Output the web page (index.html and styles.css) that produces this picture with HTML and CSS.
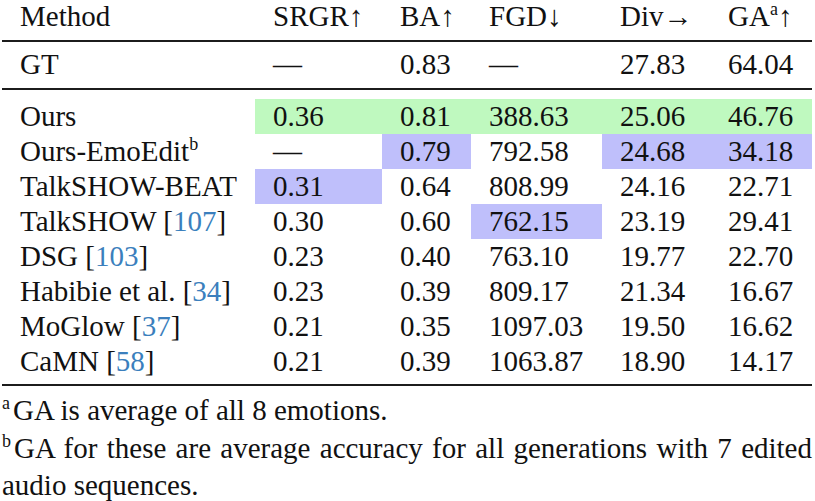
FILE: index.html
```html
<!DOCTYPE html>
<html>
<head>
<meta charset="utf-8">
<link rel="stylesheet" href="styles.css">
</head>
<body>
<div class="page">
  <table class="results">
    <colgroup>
      <col class="c-method"><col class="c-srgr"><col class="c-ba"><col class="c-fgd"><col class="c-div"><col class="c-ga">
    </colgroup>
    <thead>
      <tr class="head">
        <th>Method</th><th>SRGR↑</th><th>BA↑</th><th>FGD↓</th><th>Div→</th><th>GA<sup>a</sup>↑</th>
      </tr>
    </thead>
    <tbody class="gt">
      <tr>
        <td>GT</td><td>—</td><td>0.83</td><td>—</td><td>27.83</td><td>64.04</td>
      </tr>
    </tbody>
    <tbody class="data">
      <tr class="spacer"><td colspan="6"></td></tr>
      <tr>
        <td>Ours</td><td class="best">0.36</td><td class="best">0.81</td><td class="best">388.63</td><td class="best">25.06</td><td class="best">46.76</td>
      </tr>
      <tr>
        <td>Ours-EmoEdit<sup>b</sup></td><td>—</td><td class="second">0.79</td><td>792.58</td><td class="second">24.68</td><td class="second">34.18</td>
      </tr>
      <tr>
        <td>TalkSHOW-BEAT</td><td class="second">0.31</td><td>0.64</td><td>808.99</td><td>24.16</td><td>22.71</td>
      </tr>
      <tr>
        <td>TalkSHOW [<a class="cite">107</a>]</td><td>0.30</td><td>0.60</td><td class="second">762.15</td><td>23.19</td><td>29.41</td>
      </tr>
      <tr>
        <td>DSG [<a class="cite">103</a>]</td><td>0.23</td><td>0.40</td><td>763.10</td><td>19.77</td><td>22.70</td>
      </tr>
      <tr>
        <td>Habibie et al. [<a class="cite">34</a>]</td><td>0.23</td><td>0.39</td><td>809.17</td><td>21.34</td><td>16.67</td>
      </tr>
      <tr>
        <td>MoGlow [<a class="cite">37</a>]</td><td>0.21</td><td>0.35</td><td>1097.03</td><td>19.50</td><td>16.62</td>
      </tr>
      <tr>
        <td>CaMN [<a class="cite">58</a>]</td><td>0.21</td><td>0.39</td><td>1063.87</td><td>18.90</td><td>14.17</td>
      </tr>
      <tr class="spacer end"><td colspan="6"></td></tr>
    </tbody>
  </table>
  <div class="notes">
    <p class="note"><sup class="mark">a</sup>GA is average of all 8 emotions.</p>
    <p class="note"><sup class="mark">b</sup>GA for these are average accuracy for all generations with 7 edited audio sequences.</p>
  </div>
</div>
</body>
</html>
```

FILE: styles.css
```css
html, body {
  margin: 0;
  padding: 0;
  background: #ffffff;
}

body {
  color: #111111;
  font-family: "Liberation Serif", serif;
}

.page {
  width: 810px;
  margin-left: 2px;
}

.results {
  width: 810px;
  table-layout: fixed;
  border-collapse: collapse;
  font-family: "Liberation Serif", serif;
  font-size: 29px;
  line-height: 33px;
}

.c-method { width: 253px; }
.c-srgr { width: 127px; }
.c-ba { width: 89px; }
.c-fgd { width: 131px; }
.c-div { width: 108px; }
.c-ga { width: 102px; }

.results th,
.results td {
  font-family: "Liberation Serif", serif;
  text-align: left;
  font-weight: normal;
  white-space: nowrap;
  padding: 1px 0 1px 18px;
  vertical-align: top;
}

.results sup {
  font-size: 18px;
  line-height: 0;
  vertical-align: 11px;
}

.head th {
  padding-top: 0;
  padding-bottom: 7px;
  border-bottom: 2px solid #1c1c1c;
}

.gt td {
  padding-top: 6px;
  padding-bottom: 7px;
  border-bottom: 2px solid #1c1c1c;
}

.data td {
  height: 33px;
}

.data .spacer td {
  height: 9px;
  padding: 0;
}

.data .spacer.end td {
  height: 5px;
  border-bottom: 2px solid #1c1c1c;
}

.best {
  background: #bff9bf;
}

.second {
  background: #bfbffb;
}

.cite {
  color: #3b7fbd;
  text-decoration: none;
}

.notes {
  padding-top: 6px;
  font-family: "Liberation Serif", serif;
  font-size: 29px;
  line-height: 37.5px;
}

.note {
  margin: 0;
  text-align: justify;
}

.mark {
  font-size: 18px;
  line-height: 0;
  vertical-align: 11px;
  margin-right: 3px;
}
```
